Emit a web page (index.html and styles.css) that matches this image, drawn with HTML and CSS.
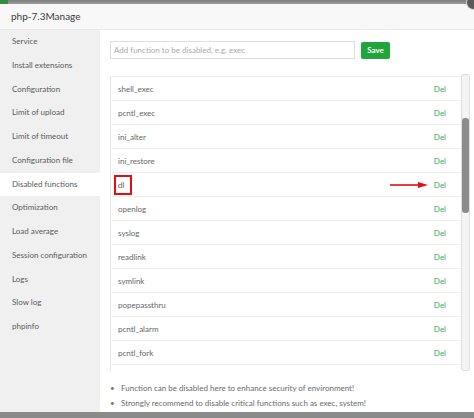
FILE: index.html
```html
<!DOCTYPE html>
<html>
<head>
<meta charset="utf-8">
<link rel="stylesheet" href="styles.css">
</head>
<body>
<div class="topbar"><span class="app-icon"></span></div>
<span class="close-btn"></span>
<div class="titlebar">php-7.3Manage</div>
<div class="layout">
  <nav class="sidebar">
    <div class="nav-item">Service</div>
    <div class="nav-item">Install extensions</div>
    <div class="nav-item">Configuration</div>
    <div class="nav-item">Limit of upload</div>
    <div class="nav-item">Limit of timeout</div>
    <div class="nav-item">Configuration file</div>
    <div class="nav-item active">Disabled functions</div>
    <div class="nav-item">Optimization</div>
    <div class="nav-item">Load average</div>
    <div class="nav-item">Session configuration</div>
    <div class="nav-item">Logs</div>
    <div class="nav-item">Slow log</div>
    <div class="nav-item">phpinfo</div>
  </nav>
  <main class="main">
    <div class="add-row">
      <input class="fn-input" type="text" placeholder="Add function to be disabled, e.g. exec">
      <button class="save-btn">Save</button>
    </div>
    <div class="list-wrap">
      <div class="rows">
        <div class="row"><span>shell_exec</span><span class="del">Del</span></div>
        <div class="row"><span>pcntl_exec</span><span class="del">Del</span></div>
        <div class="row"><span>ini_alter</span><span class="del">Del</span></div>
        <div class="row"><span>ini_restore</span><span class="del">Del</span></div>
        <div class="row"><span class="mark">dl</span>
          <svg class="arrow" width="40" height="8" viewBox="0 0 40 8"><line x1="0" y1="4" x2="30" y2="4" stroke="#e01010" stroke-width="1.6"/><polygon points="28,1 38,4 28,7" fill="#e01010"/></svg>
          <span class="del">Del</span></div>
        <div class="row"><span>openlog</span><span class="del">Del</span></div>
        <div class="row"><span>syslog</span><span class="del">Del</span></div>
        <div class="row"><span>readlink</span><span class="del">Del</span></div>
        <div class="row"><span>symlink</span><span class="del">Del</span></div>
        <div class="row"><span>popepassthru</span><span class="del">Del</span></div>
        <div class="row"><span>pcntl_alarm</span><span class="del">Del</span></div>
        <div class="row"><span>pcntl_fork</span><span class="del">Del</span></div>
        <div class="row"></div>
      </div>
      <div class="scrollbar"><div class="thumb"></div></div>
    </div>
    <ul class="notes">
      <li>Function can be disabled here to enhance security of environment!</li>
      <li>Strongly recommend to disable critical functions such as exec, system!</li>
    </ul>
  </main>
</div>
<div class="bottombar"></div>
</body>
</html>
```
FILE: styles.css
```css
* { box-sizing: border-box; }
html, body { margin: 0; padding: 0; }
body {
  width: 474px;
  height: 418px;
  overflow: hidden;
  position: relative;
  background: #fff;
  font-family: Lato, "Liberation Sans", sans-serif;
  font-size: 8px;
  color: #5a5a5a;
}
.topbar {
  height: 4px;
  background: linear-gradient(#7f7f7f, #9a9a9a);
  display: flex;
}
.app-icon {
  width: 8px;
  height: 4px;
  background: #2f8f43;
}
.close-btn {
  position: absolute;
  left: 466px;
  top: -5px;
  width: 15px;
  height: 15px;
  border-radius: 50%;
  background: #5a5a5a;
  border: 1px solid #ddd;
}
.titlebar {
  height: 26px;
  line-height: 25px;
  padding-left: 11px;
  background: #f8f8f8;
  border-bottom: 1px solid #e8e8e8;
  font-size: 10px;
  color: #3a3a3a;
}
.layout {
  display: flex;
  height: 382px;
}
.sidebar {
  width: 100px;
  background: #f0f0f0;
}
.nav-item {
  height: 23.75px;
  line-height: 23.75px;
  padding-left: 12px;
  color: #5a5a5a;
  white-space: nowrap;
}
.nav-item.active { background: #fff; }
.main {
  flex: 1;
  padding: 11px 0 0 10px;
}
.add-row {
  display: flex;
  align-items: center;
  height: 18px;
}
.fn-input {
  width: 245px;
  height: 18px;
  border: 1px solid #ddd;
  padding: 0 3px;
  font-family: inherit;
  font-size: 8px;
  color: #555;
  outline: none;
}
.fn-input::placeholder { color: #aaa; }
.save-btn {
  margin-left: 6px;
  width: 29px;
  height: 17px;
  border: none;
  border-radius: 2px;
  background: #20a53a;
  color: #fff;
  font-family: inherit;
  font-size: 8px;
  font-weight: bold;
  padding: 0;
}
.list-wrap {
  display: flex;
  margin-top: 17px;
}
.rows {
  width: 351px;
  height: 295px;
  overflow: hidden;
  border-left: 1px solid #e6e6e6;
  border-top: 1px solid #eee;
}
.row {
  position: relative;
  height: 24px;
  display: flex;
  align-items: center;
  justify-content: space-between;
  padding: 0 15px 0 7px;
  border-bottom: 1px solid #eee;
  color: #666;
}
.del { color: #35ad4e; }
.mark {
  display: inline-flex;
  align-items: center;
  width: 18px;
  height: 20px;
  margin-left: -4px;
  padding-left: 2px;
  border: 2px solid #e01010;
}
.arrow {
  position: absolute;
  left: 279px;
  top: 8px;
}
.scrollbar {
  width: 9px;
  height: 297px;
  margin-top: -2px;
  border: 1px solid #ddd;
  border-radius: 3px;
  background: #f4f4f4;
  padding-top: 43px;
}
.thumb {
  width: 7px;
  height: 95px;
  border-radius: 3px;
  background: #8c8c8c;
}
.notes {
  margin: 10px 0 0 0;
  padding: 0;
  list-style: none;
  color: #6a6a6a;
}
.notes li {
  line-height: 15px;
  padding-left: 11px;
  position: relative;
}
.notes li::before {
  content: "\2022";
  position: absolute;
  left: 0;
  color: #777;
}
.bottombar {
  height: 6px;
  background: #8a8a8a;
}
```
